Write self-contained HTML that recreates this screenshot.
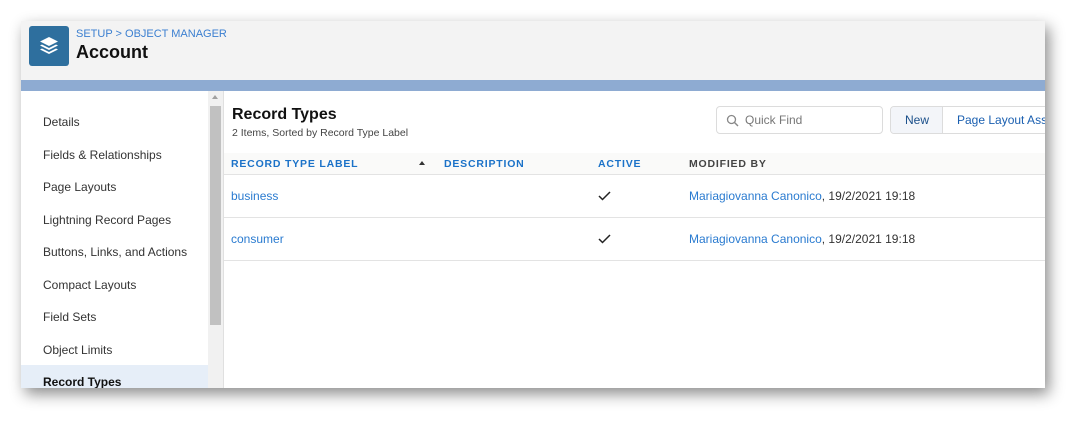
<!DOCTYPE html>
<html><head><meta charset="utf-8"><style>
*{margin:0;padding:0;box-sizing:border-box}
body{width:1087px;height:431px;background:#fff;font-family:"Liberation Sans",sans-serif;position:relative;overflow:hidden}
.win{position:absolute;left:21px;top:21px;width:1024px;height:367px;background:#fff;overflow:hidden;box-shadow:4px 6px 14px rgba(0,0,0,.45)}
.hdr{position:absolute;left:0;top:0;width:1024px;height:59px;background:#f3f3f3}
.icon{position:absolute;left:8px;top:5px;width:40px;height:40px;background:#2e6f9e;border-radius:3px}
.crumb{position:absolute;left:55px;top:7px;font-size:11px;color:#3b7fd0}
.title{position:absolute;left:55px;top:21px;font-size:18px;color:#111;font-weight:bold}
.band{position:absolute;left:0;top:59px;width:1024px;height:11px;background:#8eabd2}
.side{position:absolute;left:0;top:70px;width:187px;height:297px;background:#fff}
.side div{position:absolute;left:22px;font-size:12px;color:#333}
.sel{position:absolute;left:0;top:274px;width:187px;height:30px;background:#e6eef8}
.sb{position:absolute;left:187px;top:70px;width:15px;height:297px;background:#f1f1f1}
.thumb{position:absolute;left:2px;top:15px;width:11px;height:219px;background:#c1c1c1}
.main{position:absolute;left:202px;top:70px;width:822px;height:297px;border-left:1px solid #e0e0e0}
.abs{position:absolute}
.th{position:absolute;top:12px;font-size:10.5px;font-weight:bold;color:#1b72c8;letter-spacing:.8px}
a{color:#2a7bd0;text-decoration:none}
.cell{position:absolute;font-size:12px;color:#333}
</style></head><body>
<div class="win">
 <div class="hdr">
  <div class="icon"><svg width="40" height="40" viewBox="0 0 40 40"><g fill="#fff"><path d="M20 11 L29 15.5 L20 20 L11 15.5Z"/><path d="M13 18.5 L20 22 L27 18.5 L29 19.5 L20 24 L11 19.5Z"/><path d="M13 22.5 L20 26 L27 22.5 L29 23.5 L20 28 L11 23.5Z"/></g></svg></div>
  <div class="crumb">SETUP &gt; OBJECT MANAGER</div>
  <div class="title">Account</div>
 </div>
 <div class="band"></div>
 <div class="side">
  <div style="top:24px">Details</div>
  <div style="top:57px">Fields &amp; Relationships</div>
  <div style="top:89px">Page Layouts</div>
  <div style="top:122px">Lightning Record Pages</div>
  <div style="top:154px">Buttons, Links, and Actions</div>
  <div style="top:187px">Compact Layouts</div>
  <div style="top:219px">Field Sets</div>
  <div style="top:252px">Object Limits</div>
  <span class="sel"></span>
  <div style="top:284px;font-weight:bold;color:#111">Record Types</div>
 </div>
 <div class="sb"><div class="abs" style="left:4px;top:4px;width:0;height:0;border-left:3.5px solid transparent;border-right:3.5px solid transparent;border-bottom:4px solid #a0a0a0"></div><div class="thumb"></div></div>
 <div class="main">
  <div class="abs" style="left:8px;top:15px;font-size:16px;font-weight:bold;color:#111">Record Types</div>
  <div class="abs" style="left:8px;top:36px;font-size:10.5px;color:#444">2 Items, Sorted by Record Type Label</div>
  <div class="abs" style="left:492px;top:15px;width:167px;height:28px;border:1px solid #dcdcdc;border-radius:4px;background:#fff">
   <svg class="abs" style="left:9px;top:7px" width="13" height="13" viewBox="0 0 13 13"><circle cx="5.5" cy="5.5" r="4" fill="none" stroke="#888" stroke-width="1.3"/><path d="M8.5 8.5L12 12" stroke="#888" stroke-width="1.4"/></svg>
   <span class="abs" style="left:28px;top:6px;font-size:12px;color:#777">Quick Find</span>
  </div>
  <div class="abs" style="left:666px;top:15px;width:170px;height:28px;border:1px solid #dcdcdc;border-radius:4px;background:#fff;overflow:hidden">
   <div class="abs" style="left:0;top:0;width:52px;height:28px;background:#f3f5f9;border-right:1px solid #dcdcdc"></div>
   <span class="abs" style="left:14px;top:6px;font-size:12px;color:#1a4f8a">New</span>
   <span class="abs" style="left:66px;top:6px;font-size:12px;color:#1a5fb0;white-space:nowrap">Page Layout Assignment</span>
  </div>
  <div class="abs" style="left:0;top:62px;width:822px;height:22px;background:#fafaf9;border-bottom:1px solid #e3e3e3">
   <span class="th" style="top:5px;left:7px">RECORD TYPE LABEL</span>
   <span class="abs" style="left:195px;top:8px;width:0;height:0;border-left:3px solid transparent;border-right:3px solid transparent;border-bottom:4px solid #333"></span>
   <span class="th" style="top:5px;left:220px">DESCRIPTION</span>
   <span class="th" style="top:5px;left:374px">ACTIVE</span>
   <span class="th" style="top:5px;left:465px;color:#444">MODIFIED BY</span>
  </div>
  <div class="abs" style="left:0;top:84px;width:822px;height:43px;border-bottom:1px solid #e3e3e3">
   <a class="cell" style="left:7px;top:14px;color:#2a7bd0">business</a>
   <svg class="abs" style="left:374px;top:16px" width="13" height="10" viewBox="0 0 13 10"><path d="M1 5 L4.5 8.5 L12 1" fill="none" stroke="#222" stroke-width="1.5"/></svg>
   <span class="cell" style="left:465px;top:14px"><a>Mariagiovanna Canonico</a>, 19/2/2021 19:18</span>
  </div>
  <div class="abs" style="left:0;top:127px;width:822px;height:43px;border-bottom:1px solid #e3e3e3">
   <a class="cell" style="left:7px;top:14px;color:#2a7bd0">consumer</a>
   <svg class="abs" style="left:374px;top:16px" width="13" height="10" viewBox="0 0 13 10"><path d="M1 5 L4.5 8.5 L12 1" fill="none" stroke="#222" stroke-width="1.5"/></svg>
   <span class="cell" style="left:465px;top:14px"><a>Mariagiovanna Canonico</a>, 19/2/2021 19:18</span>
  </div>
 </div>
</div>
</body></html>
